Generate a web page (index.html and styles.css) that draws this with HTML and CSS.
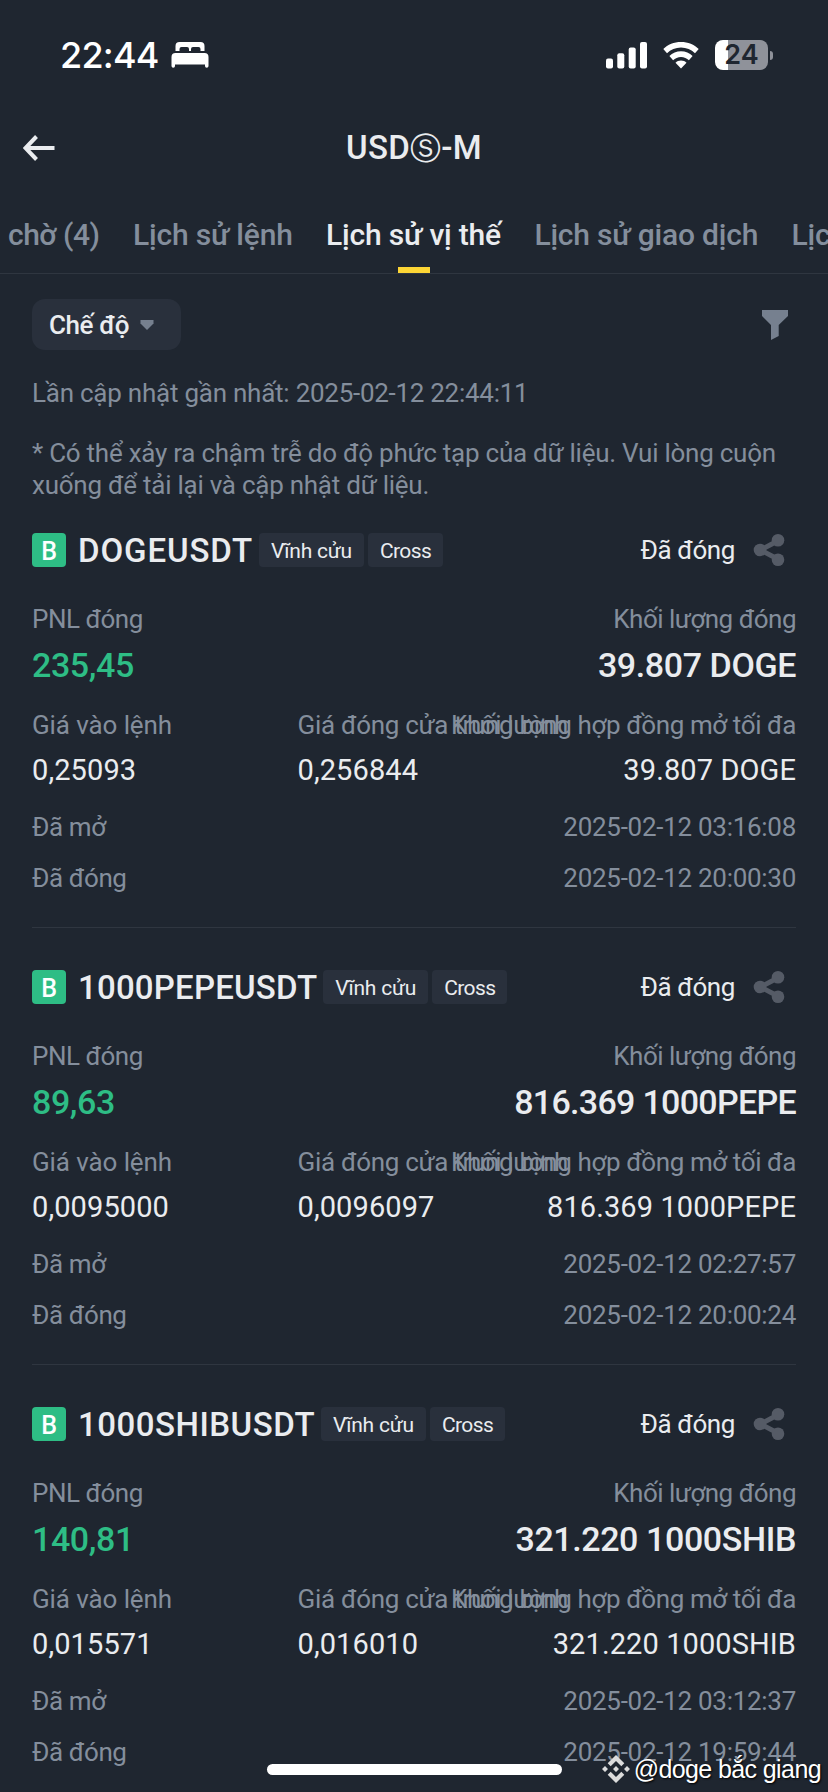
FILE: index.html
```html
<!DOCTYPE html>
<html lang="vi">
<head>
  <meta charset="UTF-8">
  <title>USDⓈ-M</title>
  <meta name="viewport" content="width=device-width, initial-scale=1.0">
  <link rel="stylesheet" href="styles.css">
</head>
<body>
  <svg class="sprite">
    <symbol id="share" viewBox="0 0 32 34">
      <path d="M25.500 7.500L7.500 17l18 9.500" fill="none" stroke="currentColor" stroke-width="5"/>
      <circle cx="25" cy="7.300" r="6.300" fill="currentColor"/>
      <circle cx="25" cy="26.700" r="6.300" fill="currentColor"/>
      <circle cx="7" cy="17" r="6.300" fill="currentColor"/>
    </symbol>
  </svg>

  <div class="status">
    <span class="clock">22:44</span>
    <svg class="bed" width="38" height="26" viewBox="0 0 38 26">
      <path fill="#fff" d="M4.500 9V4a4 4 0 0 1 4-4h21a4 4 0 0 1 4 4v5h-4V7a2 2 0 0 0-2-2H22a2 2 0 0 0-2 2v2h-2V7a2 2 0 0 0-2-2h-5.500a2 2 0 0 0-2 2v2z"/>
      <path fill="#fff" d="M0.500 15a4 4 0 0 1 4-4h29a4 4 0 0 1 4 4v9a1.700 1.700 0 0 1-3.500 0v-1.500H4V24a1.700 1.700 0 0 1-3.500 0z"/>
    </svg>
    <svg class="signal" width="42" height="27" viewBox="0 0 42 27" fill="#fff">
      <rect x="0" y="16.500" width="7" height="10" rx="2"/>
      <rect x="11.300" y="11.300" width="7" height="15.200" rx="2"/>
      <rect x="22.700" y="5.500" width="7" height="21" rx="2"/>
      <rect x="34" y="0" width="7" height="26.500" rx="2"/>
    </svg>
    <svg class="wifi" width="36" height="27" viewBox="0 0 36 27" fill="#fff">
      <path d="M18 0C11 0 4.800 2.600 0.300 7l3.700 4.200C7.700 7.600 12.600 5.500 18 5.500s10.300 2.100 14 5.700L35.700 7C31.200 2.600 25 0 18 0z"/>
      <path d="M18 9.300c-4.500 0-8.600 1.800-11.600 4.700l3.700 4.200c2-2 4.800-3.300 7.900-3.300s5.900 1.300 7.900 3.300l3.700-4.200c-3-2.900-7.100-4.700-11.600-4.700z"/>
      <path d="M18 18.500c-2.200 0-4.100.8-5.500 2.200L18 26.500l5.500-5.800c-1.400-1.400-3.300-2.200-5.500-2.200z"/>
    </svg>
    <div class="battery">24</div>
    <i class="battery-tip"></i>
  </div>

  <div class="navbar">
    <svg class="back" width="32" height="26" viewBox="0 0 32 26">
      <path d="M13.500 1.500L2.500 13l11 11.500M3 13h28.500" fill="none" stroke="#eaecef" stroke-width="4"/>
    </svg>
    <h1>USD<span class="circled">Ⓢ</span>-M</h1>
  </div>

  <div class="tabs">
    <span>chờ (4)</span>
    <span>Lịch sử lệnh</span>
    <span class="active">Lịch sử vị thế</span>
    <span>Lịch sử giao dịch</span>
    <span>Lịch</span>
  </div>

  <div class="content">
    <div class="filters">
      <button class="mode">Chế độ <svg width="14" height="10" viewBox="0 0 14 10"><path d="M0.500 0h13v3.500L7 10 0.500 3.500z" fill="#76808f"/></svg></button>
      <svg width="26" height="30" viewBox="0 0 26 30"><path d="M0 0h26v6l-9.300 9v11L9 30V15L0 6z" fill="#76808f"/></svg>
    </div>
    <p class="updated">Lần cập nhật gần nhất: <span class="num">2025-02-12 22:44:11</span></p>
    <p class="note">* Có thể xảy ra chậm trễ do độ phức tạp của dữ liệu. Vui lòng cuộn xuống để tải lại và cập nhật dữ liệu.</p>

    <div class="position">
      <div class="head">
        <b class="side">B</b>
        <h2>DOGEUSDT</h2>
        <span class="tag">Vĩnh cửu</span>
        <span class="tag cross">Cross</span>
        <span class="state">Đã đóng</span>
        <svg class="share"><use href="#share"/></svg>
      </div>
      <div class="row pnl-label"><span>PNL đóng</span><span>Khối lượng đóng</span></div>
      <div class="row pnl"><span class="green">235,45</span><span>39.807 DOGE</span></div>
      <div class="cols"><span>Giá vào lệnh</span><span>Giá đóng cửa trung bình</span><span>Khối lượng hợp đồng mở tối đa</span></div>
      <div class="cols prices"><span>0,25093</span><span>0,256844</span><span>39.807 DOGE</span></div>
      <div class="row time"><span>Đã mở</span><span class="num">2025-02-12 03:16:08</span></div>
      <div class="row time"><span>Đã đóng</span><span class="num">2025-02-12 20:00:30</span></div>
    </div>

    <div class="position pepe">
      <div class="head">
        <b class="side">B</b>
        <h2>1000PEPEUSDT</h2>
        <span class="tag">Vĩnh cửu</span>
        <span class="tag cross">Cross</span>
        <span class="state">Đã đóng</span>
        <svg class="share"><use href="#share"/></svg>
      </div>
      <div class="row pnl-label"><span>PNL đóng</span><span>Khối lượng đóng</span></div>
      <div class="row pnl"><span class="green">89,63</span><span>816.369 1000PEPE</span></div>
      <div class="cols"><span>Giá vào lệnh</span><span>Giá đóng cửa trung bình</span><span>Khối lượng hợp đồng mở tối đa</span></div>
      <div class="cols prices"><span>0,0095000</span><span>0,0096097</span><span>816.369 1000PEPE</span></div>
      <div class="row time"><span>Đã mở</span><span class="num">2025-02-12 02:27:57</span></div>
      <div class="row time"><span>Đã đóng</span><span class="num">2025-02-12 20:00:24</span></div>
    </div>

    <div class="position shib">
      <div class="head">
        <b class="side">B</b>
        <h2>1000SHIBUSDT</h2>
        <span class="tag">Vĩnh cửu</span>
        <span class="tag cross">Cross</span>
        <span class="state">Đã đóng</span>
        <svg class="share"><use href="#share"/></svg>
      </div>
      <div class="row pnl-label"><span>PNL đóng</span><span>Khối lượng đóng</span></div>
      <div class="row pnl"><span class="green">140,81</span><span>321.220 1000SHIB</span></div>
      <div class="cols"><span>Giá vào lệnh</span><span>Giá đóng cửa trung bình</span><span>Khối lượng hợp đồng mở tối đa</span></div>
      <div class="cols prices"><span>0,015571</span><span>0,016010</span><span>321.220 1000SHIB</span></div>
      <div class="row time"><span>Đã mở</span><span class="num">2025-02-12 03:12:37</span></div>
      <div class="row time"><span>Đã đóng</span><span class="num">2025-02-12 19:59:44</span></div>
    </div>
  </div>

  <div class="home-bar"></div>
  <div class="watermark">
    <svg width="28" height="28" viewBox="0 0 28 28" fill="#dcdcdc">
      <path d="M14 0l8.300 8.300-3 3L14 6l-5.300 5.300-3-3z"/>
      <path d="M14 28l8.300-8.300-3-3L14 22l-5.300-5.300-3 3z"/>
      <path d="M14 11l3 3-3 3-3-3zM3 11l3 3-3 3-3-3zM25 11l3 3-3 3-3-3z"/>
    </svg>
    <span>@doge bắc giang</span>
  </div>
</body>
</html>
```
FILE: styles.css
```css
* {
  box-sizing: border-box;
}
body {
  margin: 0;
  height: 1792px;
  overflow: hidden;
  position: relative;
  background: #1f2630;
  color: #eaecef;
  font-family: Roboto, "Noto Sans", sans-serif;
  font-size: 26px;
  line-height: 32px;
  letter-spacing: -0.4px;
}
h1, h2, p {
  margin: 0;
}
.sprite {
  position: absolute;
  width: 0;
  height: 0;
}

/* status bar */
.status {
  display: flex;
  align-items: center;
  height: 110px;
  padding: 0 55px 0 60px;
}
.clock {
  font-family: Inter, sans-serif;
  font-size: 36px;
  font-weight: 500;
  letter-spacing: -0.8px;
  color: #fff;
}
.bed {
  margin-left: 12px;
}
.signal {
  margin-left: auto;
}
.wifi {
  margin-left: 15px;
}
.battery {
  width: 53px;
  height: 30px;
  margin-left: 16px;
  border-radius: 8px;
  background: linear-gradient(to right, #fff 13px, #8f929a 13px);
  color: #1f2630;
  font-family: Inter, sans-serif;
  font-size: 27px;
  font-weight: 600;
  line-height: 30px;
  text-align: center;
  letter-spacing: 0;
}
.battery-tip {
  width: 3px;
  height: 9px;
  margin-left: 2px;
  border-radius: 0 4px 4px 0;
  background: #8f929a;
}

/* title */
.navbar {
  display: grid;
  grid-template-columns: 60px 1fr 60px;
  align-items: center;
  height: 76px;
  padding: 0 23px;
}
h1 {
  font-size: 33px;
  font-weight: 500;
  line-height: 40px;
  letter-spacing: 0.3px;
  text-align: center;
}
.circled {
  font-family: "DejaVu Sans", sans-serif;
  font-weight: 400;
  font-size: 31px;
}

/* tabs */
.tabs {
  display: flex;
  gap: 33.5px;
  height: 88px;
  padding: 29px 0 0 8px;
  overflow: hidden;
  border-bottom: 1px solid #2f3640;
  color: #848e9c;
  font-size: 30px;
  font-weight: 500;
  line-height: 40px;
  letter-spacing: -0.2px;
  white-space: nowrap;
}
.tabs span:first-child {
  letter-spacing: -0.5px;
}
.tabs .active {
  position: relative;
  height: 58px;
  color: #eaecef;
}
.tabs .active::after {
  content: "";
  position: absolute;
  left: 72px;
  bottom: 0;
  width: 32px;
  height: 6px;
  background: #fcd535;
}

.content {
  padding: 25px 32px 0;
}
.filters {
  display: flex;
  justify-content: space-between;
  align-items: center;
  padding-right: 8px;
}
.mode {
  display: flex;
  align-items: center;
  gap: 11px;
  width: 149px;
  height: 51px;
  padding: 1px 0 0 17px;
  border: 0;
  border-radius: 13px;
  background: #29303c;
  color: #eaecef;
  font: 500 26px Roboto, sans-serif;
  letter-spacing: -0.4px;
}
.updated {
  margin-top: 27px;
  color: #848e9c;
  letter-spacing: -0.24px;
}
.note {
  margin-top: 28px;
  color: #848e9c;
  letter-spacing: -0.25px;
}
.num {
  letter-spacing: -0.28px;
}

/* position card */
.position {
  margin-top: 42px;
  padding-bottom: 33px;
  border-bottom: 1px solid #2f3640;
}
.note + .position {
  margin-top: 32px;
}
.head {
  display: flex;
  align-items: center;
  height: 34px;
}
.side {
  width: 34px;
  height: 34px;
  border-radius: 4px;
  background: #2ebd85;
  color: #fff;
  font-size: 25px;
  font-weight: 500;
  line-height: 37px;
  text-align: center;
}
h2 {
  margin: 2px 6px 0 12px;
  font-size: 33px;
  font-weight: 500;
  line-height: 36px;
  letter-spacing: 0.9px;
}
.pepe h2 {
  letter-spacing: 0.2px;
}
.shib h2 {
  letter-spacing: 0.5px;
}
.tag {
  height: 34px;
  margin-right: 4px;
  padding: 0 12px;
  border-radius: 4px;
  background: #29303c;
  font-size: 21px;
  line-height: 36px;
  letter-spacing: -0.2px;
}
.cross {
  letter-spacing: -0.6px;
}
.state {
  margin-left: auto;
  line-height: 34px;
}
.share {
  width: 32px;
  height: 34px;
  margin: 0 11px 0 18px;
  color: #555b66;
}
.row, .cols {
  display: flex;
  justify-content: space-between;
  color: #848e9c;
  white-space: nowrap;
}
.pnl-label {
  margin-top: 36px;
  letter-spacing: -0.5px;
}
.pnl {
  margin-top: 10px;
  color: #eaecef;
  font-size: 34px;
  font-weight: 500;
  line-height: 40px;
}
.pepe .pnl {
  letter-spacing: -0.7px;
}
.pnl .green {
  color: #2ebd85;
  letter-spacing: -0.4px;
}
.cols {
  display: grid;
  grid-template-columns: 265.5px 264.5px minmax(0, 1fr);
  margin-top: 24px;
}
.cols span:first-child {
  letter-spacing: -0.1px;
}
.cols span:nth-child(2) {
  letter-spacing: -0.3px;
}
.cols span:last-child {
  justify-self: end;
}
.cols.prices {
  margin-top: 11px;
  color: #eaecef;
  font-size: 29px;
  line-height: 36px;
}
.cols.prices span {
  letter-spacing: 0.1px;
}
.time {
  margin-top: 19px;
}
.prices + .time {
  margin-top: 23px;
}

/* overlays */
.home-bar {
  position: absolute;
  left: 267px;
  top: 1764px;
  width: 295px;
  height: 11px;
  border-radius: 6px;
  background: #fff;
}
.watermark {
  position: absolute;
  right: 7px;
  top: 1753px;
  display: flex;
  align-items: center;
  gap: 4px;
  color: #fff;
  font-family: "Liberation Sans", sans-serif;
  font-size: 25px;
  letter-spacing: -0.6px;
  text-shadow: 1px 1px 2px #000;
}
```
